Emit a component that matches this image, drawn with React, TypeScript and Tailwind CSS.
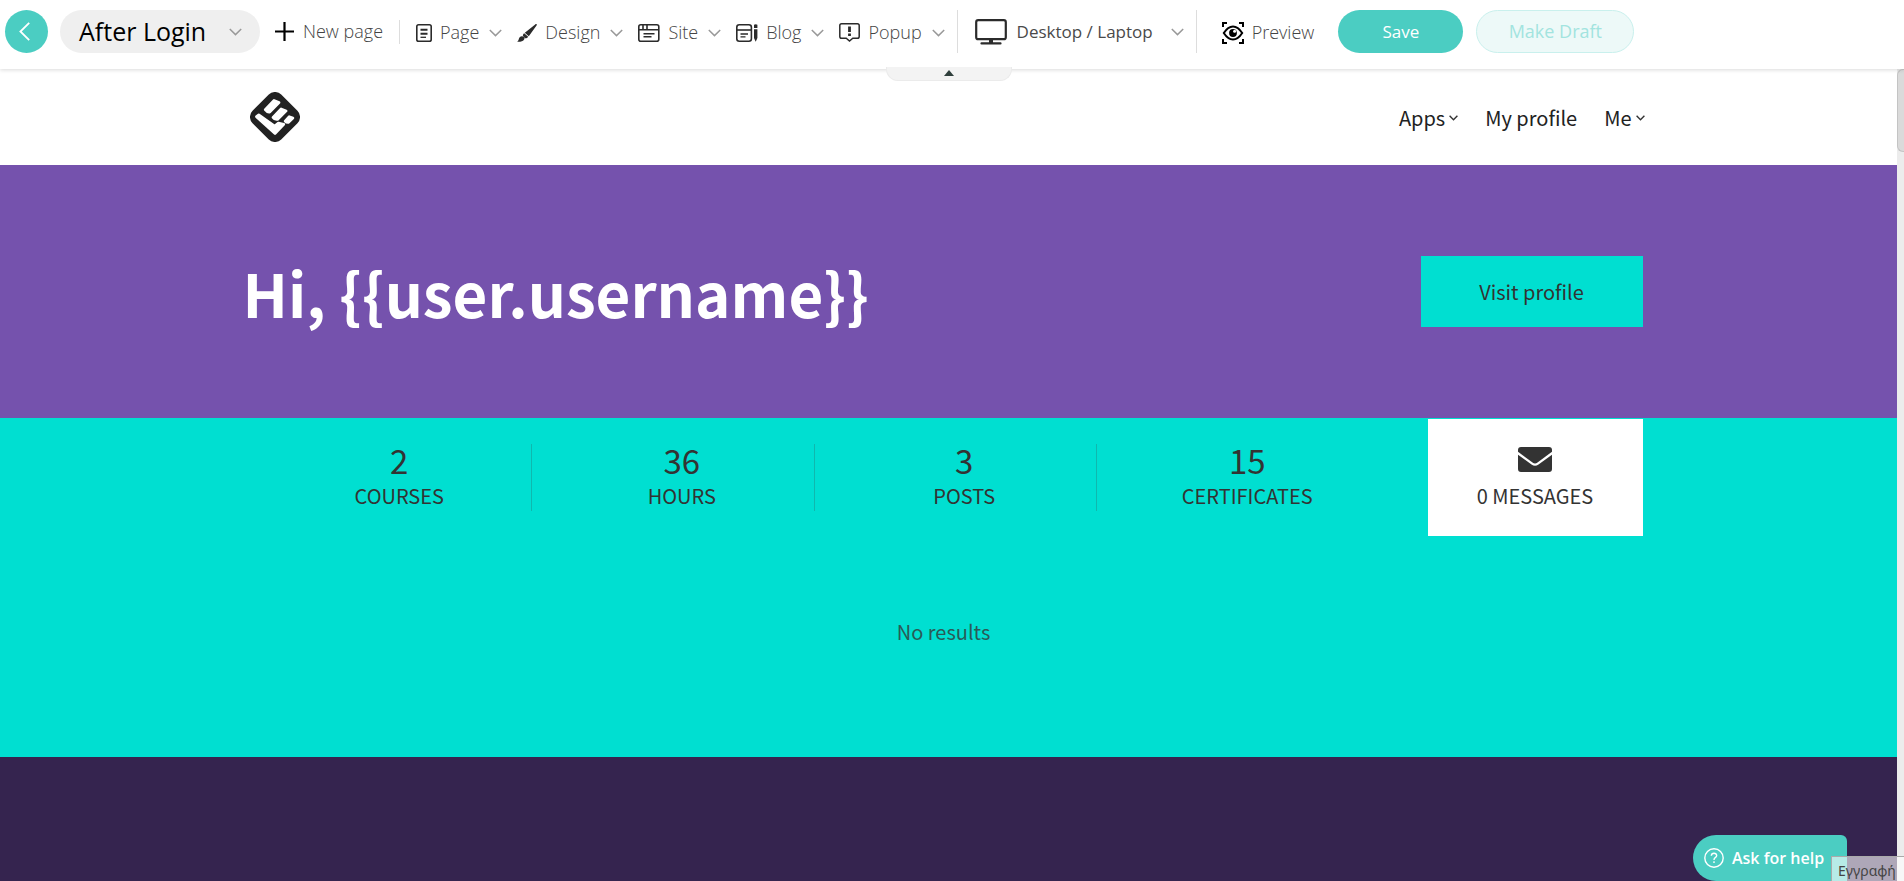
import type { ReactNode } from "react";

const stats = [
  { value: "2", label: "COURSES" },
  { value: "36", label: "HOURS" },
  { value: "3", label: "POSTS" },
  { value: "15", label: "CERTIFICATES" },
];

function Chevron({ className = "" }: { className?: string }) {
  return (
    <svg viewBox="0 0 13 8" className={`h-2 w-[13px] shrink-0 fill-none stroke-[#999] ${className}`} strokeWidth="1.5">
      <path d="M.8 1l5.7 5.6L12.2 1" />
    </svg>
  );
}

function SmallChevron() {
  return (
    <svg viewBox="0 0 9 6" className="h-1.5 w-[9px] fill-none stroke-[#333]" strokeWidth="1.4">
      <path d="M.6.8l3.9 4L8.4.8" />
    </svg>
  );
}

function PageIcon() {
  return (
    <svg viewBox="0 0 16 18" className="h-[18px] w-4 fill-none stroke-[#2b2b2b]" strokeWidth="1.6">
      <rect x=".8" y=".8" width="14.4" height="16.4" rx="1.8" />
      <path d="M4.5 5.7h7M4.5 9.7h7" strokeWidth="2" />
      <path d="M4.5 13.3h5.5" strokeWidth="1.3" />
    </svg>
  );
}

function BrushIcon() {
  return (
    <svg viewBox="0 0 20 18" className="h-[18px] w-5 fill-[#2b2b2b]">
      <path d="M19.4.1c.5.2.6.7.3 1.1L11.8 12.2 7.8 8.7 18.2.4c.4-.3.8-.4 1.2-.3z" />
      <path d="M7.2 9.3l4 3.5c-1 1.5-2.3 1.7-3.2 1.5L5.9 12c-.1-1 .3-2 1.300-2.700z" />
      <path d="M5.3 12.2c1.8.4 2.7 1.500 2 3C6.300 17.400 3.200 18 0 17.800c1.300-.7 1.500-1.700 1.900-3 .5-1.800 1.700-2.900 3.400-2.600z" />
    </svg>
  );
}

function SiteIcon() {
  return (
    <svg viewBox="0 0 22 18" className="h-[18px] w-[22px] fill-none stroke-[#2b2b2b]" strokeWidth="1.6">
      <rect x=".8" y=".8" width="20" height="16.4" rx="2" />
      <path d="M1 5.8h20M5 1v4.500M9 1v4.500" />
      <path d="M5.5 9.7h11M5.5 12.7h8" />
    </svg>
  );
}

function BlogIcon() {
  return (
    <svg viewBox="0 0 22 18" className="h-[18px] w-[22px] fill-none stroke-[#2b2b2b]" strokeWidth="1.6">
      <rect x=".8" y=".8" width="14.6" height="16.4" rx="2.5" />
      <path d="M1 6h14.4" />
      <path d="M4.5 10h7.5M4.5 12.8h5" strokeWidth="1.3" />
      <path d="M18 .8q1.800-1 3.400 0V4H18zM18 5.300h3.400V14l-1.700 3.800L18 14z" className="fill-[#2b2b2b] stroke-none" />
    </svg>
  );
}

function PopupIcon() {
  return (
    <svg viewBox="0 0 21 19" className="h-[19px] w-[21px] fill-none stroke-[#2b2b2b]" strokeWidth="1.5">
      <path d="M2.600.8h15.800q1.800 0 1.800 1.800v10.800q0 1.800-1.800 1.800h-4.600L10.500 18l-3.300-2.800H2.600q-1.800 0-1.800-1.800V2.600Q.8.8 2.600.8z" />
      <path d="M10.5 3.5v5.500M10.5 10.5v2.500" strokeWidth="2.8" />
    </svg>
  );
}

function DesktopIcon() {
  return (
    <svg viewBox="0 0 32 26" className="h-[26px] w-8 fill-none stroke-[#2b2b2b]" strokeWidth="2.2">
      <rect x="1.2" y="1.2" width="29.6" height="19" rx="2" />
      <path d="M16 20.5v4" strokeWidth="4" />
      <path d="M6.5 24.400h19" strokeLinecap="round" />
    </svg>
  );
}

function PreviewIcon() {
  return (
    <svg viewBox="0 0 22 22" className="h-[22px] w-[22px] fill-none stroke-black" strokeWidth="2">
      <path d="M1 5V1h4M17 1h4v4M21 17v4h-4M5 21H1v-4" />
      <path d="M1.8 11Q6 4.5 11 4.5t9.200 6.500Q16 17.500 11 17.500T1.800 11z" />
      <circle cx="11" cy="11" r="3.9" className="fill-black stroke-none" />
      <circle cx="12.6" cy="9.3" r="1.5" className="fill-white stroke-none" />
    </svg>
  );
}

function Logo() {
  return (
    <svg viewBox="14 5 148 148" className="h-[50px] w-[50px]" role="img" aria-label="Logo">
      <rect x="28" y="19" width="120" height="120" rx="26" transform="rotate(45 88 79)" className="fill-[#222]" />
      <g className="fill-white stroke-white" strokeWidth="8" strokeLinejoin="round">
        <path d="M33 78l7-5 47 33 11-9 16 4-26 27z" />
        <path d="M59 57l26-27 15 6-27 28q-7 2-14-7z" />
        <path d="M82 80l24-25 15 6-25 25q-8 2-14-6z" />
        <path d="M118 91l12-13 11 4-13 13q-6 1-10-4z" />
      </g>
    </svg>
  );
}

function MenuButton({ icon, label }: { icon: ReactNode; label: string }) {
  return (
    <button type="button" className="flex h-full items-center">
      {icon}
      <span className="ml-2">{label}</span>
      <Chevron className="ml-2.5" />
    </button>
  );
}

function Toolbar() {
  return (
    <header className="relative z-10 flex h-[69px] shrink-0 items-start bg-white pt-2.5 pl-[5px] font-['Open_Sans',sans-serif] text-[18px] shadow-[0_1px_4px_rgba(0,0,0,0.15)]">
      <div className="flex h-[43px] items-center whitespace-nowrap text-[#444]">
        <button type="button" aria-label="Back" className="flex h-[43px] w-[43px] items-center justify-center rounded-full bg-[#4bcdc2]">
          <svg viewBox="0 0 11 19" className="mr-1 h-[19px] w-[11px] fill-none stroke-white" strokeWidth="1.8">
            <path d="M10.2.8L1.4 9.5l8.8 8.7" />
          </svg>
        </button>
        <button type="button" className="ml-3 flex h-full w-[200px] items-center justify-between rounded-full bg-[#efefef] pr-[18px] pl-[19px] text-[25px] text-black">
          After Login
          <Chevron />
        </button>
        <button type="button" className="ml-[15px] flex h-full items-center font-light">
          <svg viewBox="0 0 19 19" className="mr-[9px] h-[19px] w-[19px] stroke-black" strokeWidth="2.2">
            <path d="M9.5 0v19M0 9.5h19" />
          </svg>
          New page
        </button>
        <span className="mx-4 h-6 border-l border-[#ddd]" />
        <nav className="flex h-full items-center gap-[15px] pt-0.5 font-light">
          <MenuButton icon={<PageIcon />} label="Page" />
          <MenuButton icon={<BrushIcon />} label="Design" />
          <MenuButton icon={<SiteIcon />} label="Site" />
          <MenuButton icon={<BlogIcon />} label="Blog" />
          <MenuButton icon={<PopupIcon />} label="Popup" />
        </nav>
        <button type="button" className="ml-3 flex h-full items-center border-x border-[#ddd] pr-3 pl-[17px]">
          <DesktopIcon />
          <span className="ml-2.5 text-[17px] font-medium text-[#4a4a4a]">Desktop / Laptop</span>
          <Chevron className="ml-[18px]" />
        </button>
        <button type="button" className="ml-[25px] flex h-full items-center pt-0.5 font-light">
          <PreviewIcon />
          <span className="ml-2">Preview</span>
        </button>
        <button type="button" className="ml-6 h-full w-[125px] rounded-full bg-[#4bcdc2] text-[17px] text-white">
          Save
        </button>
        <button type="button" disabled className="ml-[13px] h-full w-[158px] rounded-full border border-[#c9f0ed] bg-[#edf9f8] text-[18px] text-[#a2e4df]">
          Make Draft
        </button>
      </div>
      <button type="button" aria-label="Collapse" className="absolute top-[67px] left-[886px] flex h-3.5 w-[126px] justify-center rounded-b-xl border border-t-0 border-[#ebebeb] bg-[#f3f3f3] pt-[3px]">
        <svg viewBox="0 0 10 6" className="h-1.5 w-2.5 fill-[#2f3f3c]">
          <path d="M5 0l5 6H0z" />
        </svg>
      </button>
    </header>
  );
}

function SiteHeader() {
  return (
    <div className="bg-white">
      <div className="mx-auto flex h-24 max-w-[1412px] items-center justify-between pr-2.5 pl-[7px]">
        <a href="#home">
          <Logo />
        </a>
        <nav className="flex items-center gap-[27px] pt-0.5 text-[20px] text-[#222]">
          <a href="#apps" className="flex items-center gap-1">
            Apps <SmallChevron />
          </a>
          <a href="#profile">My profile</a>
          <a href="#me" className="flex items-center gap-1">
            Me <SmallChevron />
          </a>
        </nav>
      </div>
    </div>
  );
}

function Hero() {
  return (
    <section className="bg-[#7552ad]">
      <div className="mx-auto flex h-[253px] max-w-[1412px] items-center justify-between pr-3">
        <h1 className="text-[60px] font-bold text-white">{"Hi, {{user.username}}"}</h1>
        <a href="#profile" className="flex h-[71px] w-[222px] items-center justify-center bg-[#00dfd1] text-[20px] text-[#333]">
          Visit profile
        </a>
      </div>
    </section>
  );
}

function Stats() {
  return (
    <section className="h-[339px] bg-[#00dfd1] pt-px text-[#333]">
      <div className="mx-auto flex max-w-[1412px] items-start pr-3 pl-[7px] text-center">
        <div className="mt-[25px] grid flex-1 grid-cols-4">
          {stats.map((item) => (
            <div key={item.label} className="h-[67px] border-r border-[#0fb8ae] pl-[18px] last:border-r-0">
              <p className="text-[33px] leading-8">{item.value}</p>
              <p className="mt-1 text-[20px] leading-8">{item.label}</p>
            </div>
          ))}
        </div>
        <a href="#messages" className="ml-12 flex h-[117px] w-[215px] flex-col items-center bg-white pt-7">
          <svg viewBox="0 0 34 25" className="h-[25px] w-[34px] fill-[#333]">
            <path d="M3 0h28q3 0 3 3v1.800L19.500 15.500q-2.500 1.800-5 0L0 4.800V3Q0 0 3 0z" />
            <path d="M0 7.800l13.500 9.700q3.500 2.400 7 0L34 7.800V22q0 3-3 3H3q-3 0-3-3z" />
          </svg>
          <span className="mt-2 text-[20px] leading-8">0 MESSAGES</span>
        </a>
      </div>
      <p className="mt-20 pr-[10px] text-center text-[20px] leading-8 text-[#2a5b58]">No results</p>
    </section>
  );
}

export default function App() {
  return (
    <div className="relative flex h-screen flex-col overflow-hidden bg-white">
      <Toolbar />
      <div className="flex min-h-0 flex-1">
        <main className="flex flex-1 flex-col bg-[#35244f] font-['Noto_Sans_CJK_SC',sans-serif]">
          <SiteHeader />
          <Hero />
          <Stats />
        </main>
        <div className="w-[7px] bg-[#ececec]">
          <div className="h-[83px] rounded-l-md border border-r-0 border-[#c4c4c4] bg-[#dadada]" />
        </div>
      </div>
      <button type="button" className="absolute right-[57px] bottom-0 flex h-[46px] w-[154px] items-center gap-2 rounded-l-[23px] rounded-tr-md bg-[#4bcdc2] pl-[11px] font-['Open_Sans',sans-serif] text-base font-semibold whitespace-nowrap text-white">
        <svg viewBox="0 0 20 20" className="h-5 w-5 shrink-0 fill-none stroke-white" strokeWidth="1.4">
          <circle cx="10" cy="10" r="9.2" />
          <path d="M7.3 7.8q.2-2.600 2.700-2.600t2.700 2.300q0 1.300-1.500 2.200-1.200.8-1.200 2.300M10 13.300v1.700" />
        </svg>
        Ask for help
      </button>
      <div className="absolute right-0 bottom-0 h-[25px] w-[73px] overflow-hidden border-t border-l border-[#aaa] bg-white/60 pl-1.5 font-['Noto_Sans',sans-serif] text-sm leading-7 text-[#444]">
        Εγγραφή
      </div>
    </div>
  );
}
